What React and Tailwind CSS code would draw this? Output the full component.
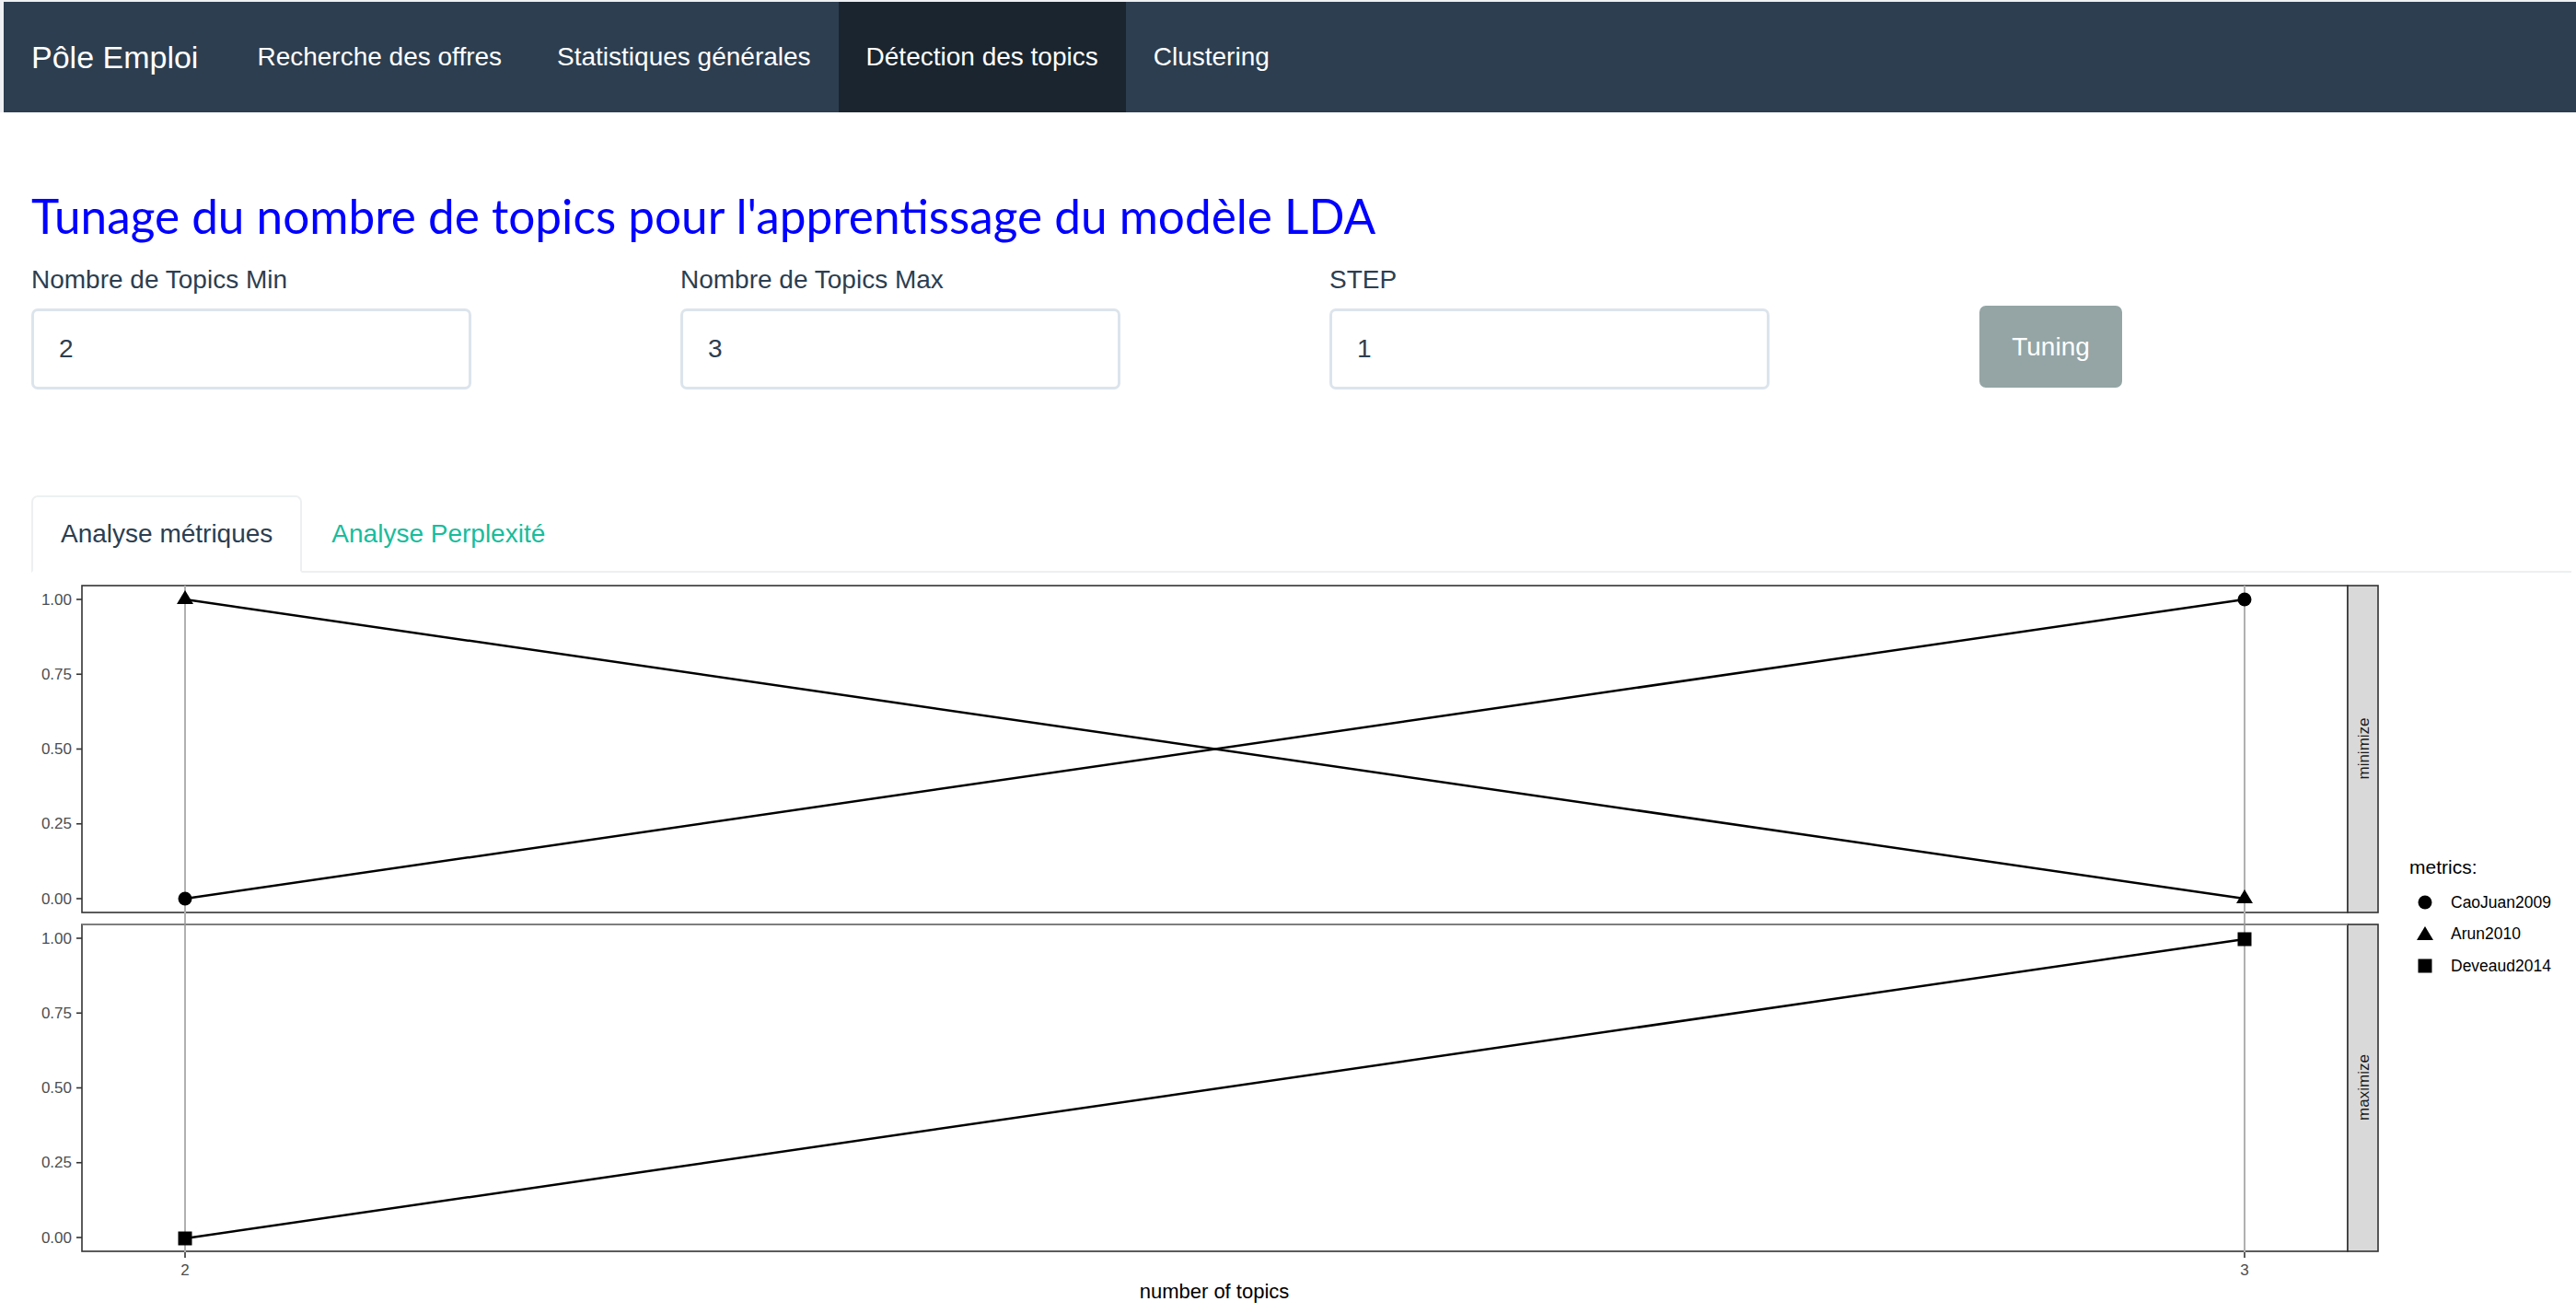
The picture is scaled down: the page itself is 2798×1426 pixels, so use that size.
import React, { useState } from 'react';

const navLinks = ['Recherche des offres', 'Statistiques générales', 'Détection des topics', 'Clustering'];

const fields = [
  { label: 'Nombre de Topics Min', value: '2' },
  { label: 'Nombre de Topics Max', value: '3' },
  { label: 'STEP', value: '1' },
];

const Triangle = ({ x, y, s = 1 }) => (
  <polygon points={`${x},${y - 10 * s} ${x + 9 * s},${y + 5 * s} ${x - 9 * s},${y + 5 * s}`} fill="#000" />
);

const Square = ({ x, y }) => <rect x={x - 7.5} y={y - 7.5} width="15" height="15" fill="#000" />;

const Dot = ({ x, y }) => <circle cx={x} cy={y} r="7.5" fill="#000" />;

const ticks = ['1.00', '0.75', '0.50', '0.25', '0.00'];

const Panel = ({ top, label }) => {
  const y0 = top + 15; // value 1.00
  const step = 81.25;
  return (
    <g>
      <rect x="89" y={top} width="2461" height="355" fill="#fff" stroke="#333" strokeWidth="1.6" />
      <rect x="2550" y={top} width="33" height="355" fill="#d9d9d9" stroke="#333" strokeWidth="1.6" />
      <text
        x="2567"
        y={top + 177}
        transform={`rotate(-90 2567 ${top + 177})`}
        textAnchor="middle"
        dominantBaseline="central"
        fontSize="17"
        fill="#1a1a1a"
      >
        {label}
      </text>
      {ticks.map((t, i) => (
        <g key={t}>
          <line x1="83" x2="89" y1={y0 + i * step} y2={y0 + i * step} stroke="#333" strokeWidth="1.6" />
          <text x="78" y={y0 + i * step} textAnchor="end" dominantBaseline="central" fontSize="17" fill="#4d4d4d">
            {t}
          </text>
        </g>
      ))}
    </g>
  );
};

const MetricsChart = () => (
  <svg width="2798" height="802" viewBox="0 624 2798 802" className="block" style={{ fontFamily: '"Liberation Sans", Arial, sans-serif' }}>
    <Panel top={638} label="minimize" />
    <Panel top={1006} label="maximize" />

    {/* vertical grid lines for topic counts */}
    <line x1="201" x2="201" y1="638" y2="1362" stroke="#b0b0b0" strokeWidth="2" />
    <line x1="2438" x2="2438" y1="638" y2="1362" stroke="#b0b0b0" strokeWidth="2" />
    <line x1="89" x2="2550" y1="1006" y2="1006" stroke="#8a8a8a" strokeWidth="1.6" />

    {/* x axis */}
    <line x1="201" x2="201" y1="1362" y2="1368" stroke="#333" strokeWidth="1.6" />
    <line x1="2438" x2="2438" y1="1362" y2="1368" stroke="#333" strokeWidth="1.6" />
    <text x="201" y="1381" textAnchor="middle" dominantBaseline="central" fontSize="17" fill="#4d4d4d">2</text>
    <text x="2438" y="1381" textAnchor="middle" dominantBaseline="central" fontSize="17" fill="#4d4d4d">3</text>
    <text x="1319" y="1404" textAnchor="middle" dominantBaseline="central" fontSize="22" fill="#000">number of topics</text>

    {/* series */}
    <line x1="201" y1="653" x2="2438" y2="978" stroke="#000" strokeWidth="2.5" />
    <line x1="201" y1="978" x2="2438" y2="653" stroke="#000" strokeWidth="2.5" />
    <line x1="201" y1="1347" x2="2438" y2="1022" stroke="#000" strokeWidth="2.5" />
    <Triangle x={201} y={653} />
    <Triangle x={2438} y={978} />
    <Dot x={201} y={978} />
    <Dot x={2438} y={653} />
    <Square x={201} y={1347} />
    <Square x={2438} y={1022} />

    {/* legend */}
    <text x="2617" y="943" dominantBaseline="central" fontSize="21" fill="#000">metrics:</text>
    <Dot x={2634} y={982} />
    <text x="2662" y="982" dominantBaseline="central" fontSize="17.5" fill="#000">CaoJuan2009</text>
    <Triangle x={2634} y={1018} />
    <text x="2662" y="1016" dominantBaseline="central" fontSize="17.5" fill="#000">Arun2010</text>
    <Square x={2634} y={1051} />
    <text x="2662" y="1051" dominantBaseline="central" fontSize="17.5" fill="#000">Deveaud2014</text>
  </svg>
);

export default function App() {
  const [tab, setTab] = useState('metrics');

  return (
    <div className="min-h-screen bg-white font-['Liberation_Sans',Arial,sans-serif] text-[#2c3e50]">
      <div className="bg-[#eef0f3] pt-[2px] pl-[4px]">
        <nav className="h-[120px] bg-[#2c3e50] flex items-stretch text-white">
          <div className="pl-[30px] pr-[34px] flex items-center text-[34px] leading-none">Pôle Emploi</div>
          {navLinks.map((l) => (
            <div
              key={l}
              className={`px-[30px] flex items-center text-[28px] leading-none ${
                l === 'Détection des topics' ? 'bg-[#1a252f]' : ''
              }`}
            >
              {l}
            </div>
          ))}
        </nav>
      </div>

      <div className="pl-[34px]">
        <h2 className="mt-[84px] font-['Lato',sans-serif] text-[51.3px] leading-[1.1] text-[#0000ff]">
          Tunage du nombre de topics pour l'apprentissage du modèle LDA
        </h2>

        <div className="mt-[22px] grid grid-cols-[705px_705px_705px_705px]">
          {fields.map((f) => (
            <div key={f.label}>
              <div className="text-[28px] leading-[39px]">{f.label}</div>
              <div className="mt-[12px] w-[478px] h-[88px] border-[3px] border-[#dce4ec] rounded-[7px] px-[27px] flex items-center text-[28px]">
                {f.value}
              </div>
            </div>
          ))}
          <div className="flex items-end">
            <button className="ml-px mb-[2px] w-[155px] h-[89px] rounded-[7px] bg-[#95a5a6] text-white text-[28px]">
              Tuning
            </button>
          </div>
        </div>
      </div>

      <div className="mt-[115px] ml-[34px] mr-[5px] flex border-b-2 border-[#ecf0f1] h-[84px]">
        <button
          onClick={() => setTab('metrics')}
          className={`-mb-[2px] px-[30px] rounded-t-[7px] text-[28px] border-2 ${
            tab === 'metrics' ? 'bg-white border-[#ecf0f1] border-b-white text-[#2c3e50]' : 'border-transparent text-[#18bc9c]'
          }`}
        >
          Analyse métriques
        </button>
        <button
          onClick={() => setTab('perplexity')}
          className={`-mb-[2px] px-[30px] rounded-t-[7px] text-[28px] border-2 ${
            tab === 'perplexity' ? 'bg-white border-[#ecf0f1] border-b-white text-[#2c3e50]' : 'border-transparent text-[#18bc9c]'
          }`}
        >
          Analyse Perplexité
        </button>
      </div>

      <MetricsChart />
    </div>
  );
}
